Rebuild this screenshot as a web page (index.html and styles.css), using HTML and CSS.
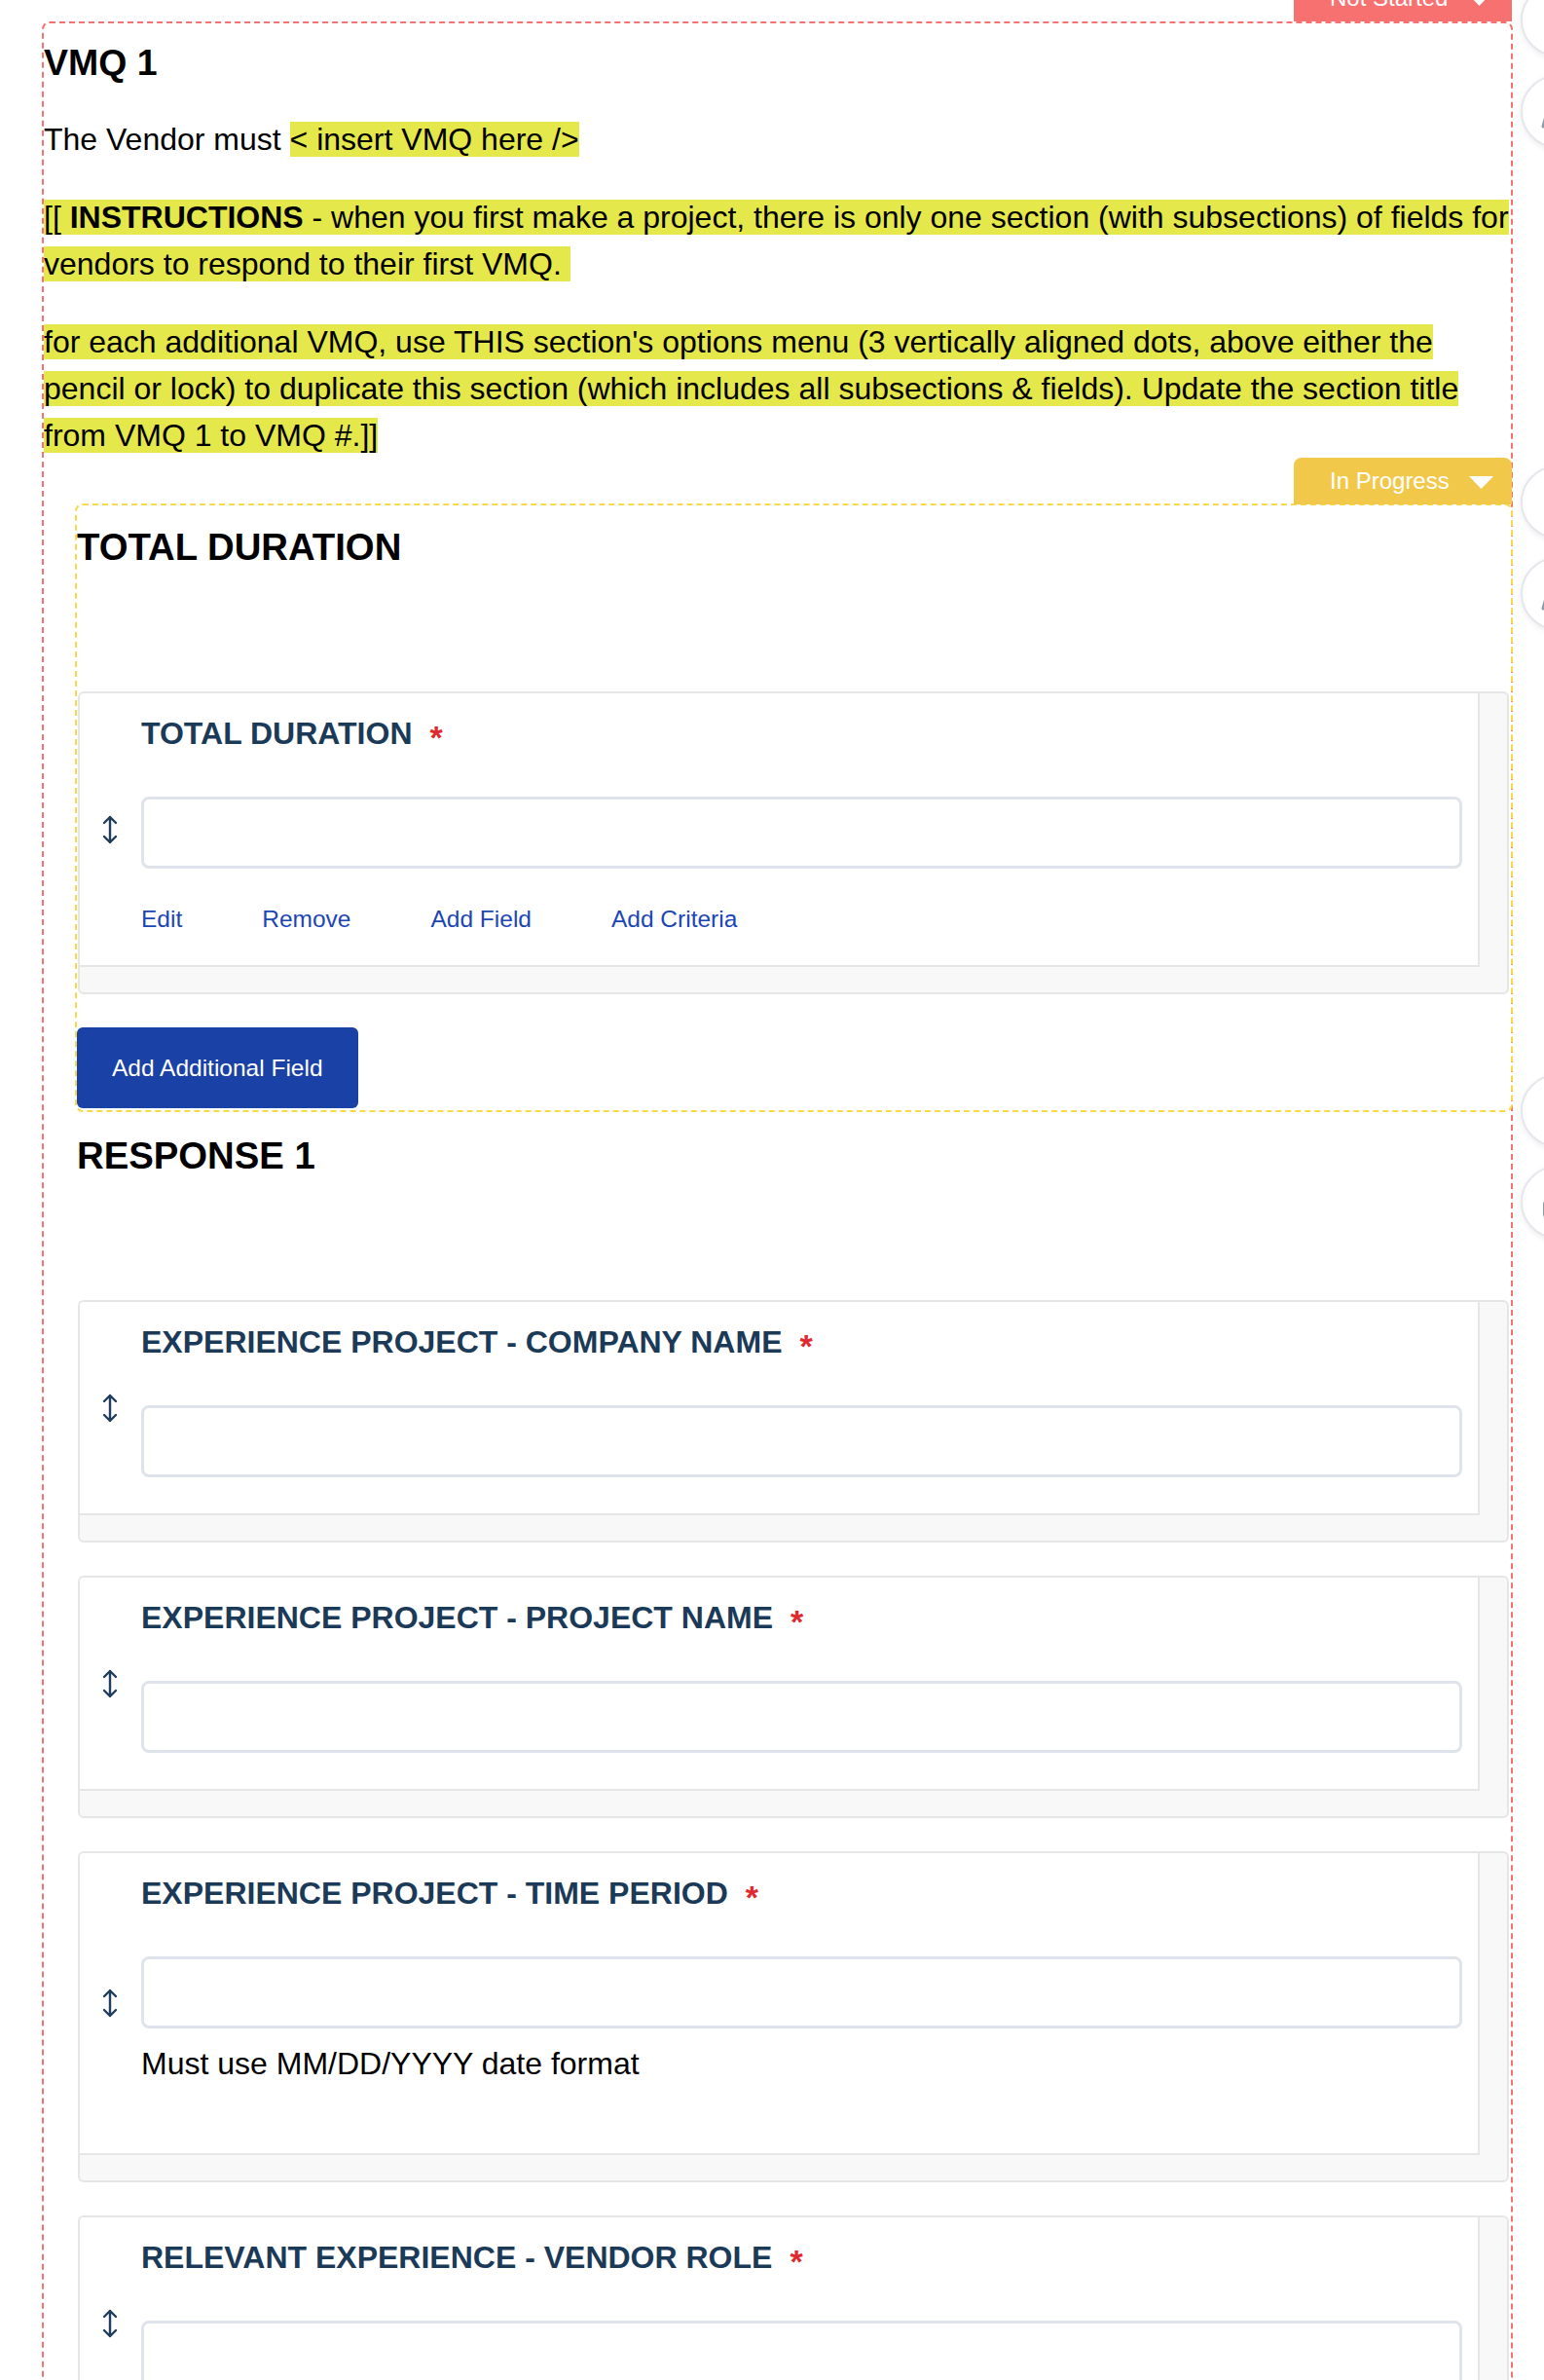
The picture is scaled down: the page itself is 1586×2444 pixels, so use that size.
FILE: index.html
```html
<!DOCTYPE html>
<html lang="en">
<head>
<meta charset="utf-8">
<title>VMQ 1</title>
<link rel="stylesheet" href="styles.css">
</head>
<body>
<div class="page">
  <section class="vmq">
    <div class="status status-red"><span>Not Started</span><svg class="caret" viewBox="0 0 25 13" width="25" height="13"><polygon points="0,0 25,0 12.5,13" fill="#fff"/></svg></div>
    <div class="side-tools">
      <div class="tool"><svg viewBox="0 0 36 36" width="36" height="36"><circle cx="18" cy="7" r="3.5" fill="#8e9aa8"/><circle cx="18" cy="18" r="3.5" fill="#8e9aa8"/><circle cx="18" cy="29" r="3.5" fill="#8e9aa8"/></svg></div>
      <div class="tool"><svg viewBox="0 0 24 24" width="36" height="36" fill="none" stroke="#8e9aa8" stroke-width="2" stroke-linecap="round" stroke-linejoin="round"><path d="M17 3a2.85 2.83 0 1 1 4 4L7.5 20.5 2 22l1.5-5.5Z"/></svg></div>
    </div>
    <h3 class="vmq-title">VMQ 1</h3>
    <p class="intro">The Vendor must <span class="hl">&lt; insert VMQ here /&gt;</span></p>
    <p class="intro"><span class="hl">[[ <b>INSTRUCTIONS</b> - when you first make a project, there is only one section (with subsections) of fields for vendors to respond to their first VMQ.&nbsp;</span></p>
    <p class="intro"><span class="hl">for each additional VMQ, use THIS section's options menu (3 vertically aligned dots, above either the pencil or lock) to duplicate this section (which includes all subsections &amp; fields). Update the section title from VMQ 1 to VMQ #.]]</span></p>

    <section class="sub sub-yellow">
      <div class="status status-yellow"><span>In Progress</span><svg class="caret" viewBox="0 0 25 13" width="25" height="13"><polygon points="0,0 25,0 12.5,13" fill="#fff"/></svg></div>
      <div class="side-tools">
        <div class="tool"><svg viewBox="0 0 36 36" width="36" height="36"><circle cx="18" cy="7" r="3.5" fill="#8e9aa8"/><circle cx="18" cy="18" r="3.5" fill="#8e9aa8"/><circle cx="18" cy="29" r="3.5" fill="#8e9aa8"/></svg></div>
        <div class="tool"><svg viewBox="0 0 24 24" width="36" height="36" fill="none" stroke="#8e9aa8" stroke-width="2" stroke-linecap="round" stroke-linejoin="round"><path d="M17 3a2.85 2.83 0 1 1 4 4L7.5 20.5 2 22l1.5-5.5Z"/></svg></div>
      </div>
      <h3 class="sub-title">TOTAL DURATION</h3>
      <div class="fields">
        <div class="field-card">
          <div class="field-inner">
            <svg class="drag" viewBox="0 0 16 30" width="16" height="30" fill="none" stroke="#1f3d5c" stroke-width="2.4" stroke-linecap="round" stroke-linejoin="round"><path d="M8 2V28M2 8L8 2L14 8M2 22L8 28L14 22"/></svg>
            <div class="field-body">
              <div class="field-label">TOTAL DURATION<span class="req">*</span></div>
              <input class="field-input" type="text">
              <div class="field-actions"><span>Edit</span><span>Remove</span><span>Add Field</span><span>Add Criteria</span></div>
            </div>
          </div>
        </div>
      </div>
      <button class="add-btn" type="button">Add Additional Field</button>
    </section>

    <section class="sub sub-plain">
      <div class="side-tools">
        <div class="tool"><svg viewBox="0 0 36 36" width="36" height="36"><circle cx="18" cy="7" r="3.5" fill="#8e9aa8"/><circle cx="18" cy="18" r="3.5" fill="#8e9aa8"/><circle cx="18" cy="29" r="3.5" fill="#8e9aa8"/></svg></div>
        <div class="tool"><svg viewBox="0 0 24 24" width="36" height="36" fill="none" stroke="#8e9aa8" stroke-width="2" stroke-linecap="round" stroke-linejoin="round"><rect x="3" y="11" width="18" height="11" rx="2"/><path d="M7 11V7a5 5 0 0 1 10 0v4"/></svg></div>
      </div>
      <h3 class="sub-title">RESPONSE 1</h3>
      <div class="fields">
        <div class="field-card">
          <div class="field-inner">
            <svg class="drag" viewBox="0 0 16 30" width="16" height="30" fill="none" stroke="#1f3d5c" stroke-width="2.4" stroke-linecap="round" stroke-linejoin="round"><path d="M8 2V28M2 8L8 2L14 8M2 22L8 28L14 22"/></svg>
            <div class="field-body">
              <div class="field-label">EXPERIENCE PROJECT - COMPANY NAME<span class="req">*</span></div>
              <input class="field-input" type="text">
            </div>
          </div>
        </div>
        <div class="field-card">
          <div class="field-inner">
            <svg class="drag" viewBox="0 0 16 30" width="16" height="30" fill="none" stroke="#1f3d5c" stroke-width="2.4" stroke-linecap="round" stroke-linejoin="round"><path d="M8 2V28M2 8L8 2L14 8M2 22L8 28L14 22"/></svg>
            <div class="field-body">
              <div class="field-label">EXPERIENCE PROJECT - PROJECT NAME<span class="req">*</span></div>
              <input class="field-input" type="text">
            </div>
          </div>
        </div>
        <div class="field-card">
          <div class="field-inner">
            <svg class="drag" viewBox="0 0 16 30" width="16" height="30" fill="none" stroke="#1f3d5c" stroke-width="2.4" stroke-linecap="round" stroke-linejoin="round"><path d="M8 2V28M2 8L8 2L14 8M2 22L8 28L14 22"/></svg>
            <div class="field-body">
              <div class="field-label">EXPERIENCE PROJECT - TIME PERIOD<span class="req">*</span></div>
              <input class="field-input" type="text">
              <p class="help">Must use MM/DD/YYYY date format</p>
            </div>
          </div>
        </div>
        <div class="field-card">
          <div class="field-inner">
            <svg class="drag" viewBox="0 0 16 30" width="16" height="30" fill="none" stroke="#1f3d5c" stroke-width="2.4" stroke-linecap="round" stroke-linejoin="round"><path d="M8 2V28M2 8L8 2L14 8M2 22L8 28L14 22"/></svg>
            <div class="field-body">
              <div class="field-label">RELEVANT EXPERIENCE - VENDOR ROLE<span class="req">*</span></div>
              <input class="field-input" type="text">
            </div>
          </div>
        </div>
      </div>
    </section>
  </section>
</div>
</body>
</html>
```

FILE: styles.css
```css
html, body {
  margin: 0;
  padding: 0;
  background: #ffffff;
}

body {
  font-family: "Liberation Sans", Arial, Helvetica, sans-serif;
  color: #000000;
}

.page {
  width: 1586px;
  height: 2444px;
  box-sizing: border-box;
  padding: 22px 0 0 43px;
  overflow: hidden;
}

.vmq {
  position: relative;
  width: 1511px;
  box-sizing: border-box;
  border: 2px dashed #f6716f;
  border-radius: 8px;
  font-size: 32px;
  line-height: 48px;
  padding-bottom: 40px;
}

.vmq-title {
  margin: 18px 0 33px;
  font-size: 37.44px;
  line-height: 44px;
  font-weight: bold;
}

.intro {
  margin: 32px 0;
}

.hl {
  background: #e5e84b;
}

.status {
  position: absolute;
  top: -50px;
  right: -1px;
  width: 224px;
  height: 48px;
  box-sizing: border-box;
  padding-left: 37px;
  display: flex;
  align-items: center;
  border-radius: 8px 8px 0 0;
  color: #ffffff;
  font-size: 24px;
  line-height: 28px;
}

.status .caret {
  margin-left: 20px;
  margin-top: 2px;
}

.status-red {
  background: #f6716f;
}

.status-yellow {
  top: -49px;
  background: #f2c84b;
}

.side-tools {
  position: absolute;
  left: calc(100% + 10px);
  top: -41px;
  display: flex;
  flex-direction: column;
  gap: 19px;
}

.tool {
  width: 75px;
  height: 75px;
  box-sizing: border-box;
  border: 2px solid #e6e7ec;
  border-radius: 50%;
  background: #ffffff;
  box-shadow: 0 2px 6px rgba(0, 0, 0, 0.08);
  display: flex;
  align-items: center;
  justify-content: center;
}

.sub {
  position: relative;
  margin: 0 -2px 0 32px;
  border: 2px dashed transparent;
  border-radius: 8px;
}

.sub-yellow {
  margin-top: 46px;
  border-color: #f9d949;
}

.sub-title {
  margin: 21px 0 126px;
  font-size: 38.3px;
  line-height: 44px;
  font-weight: bold;
}

.fields {
  display: flex;
  flex-direction: column;
  gap: 34px;
  padding: 0 2px 0 1px;
}

.field-card {
  border: 2px solid #e6e6e6;
  border-radius: 6px;
  background: #f8f8f8;
  padding: 0 28px 26px 0;
}

.field-inner {
  display: flex;
  align-items: center;
  gap: 24px;
  background: #ffffff;
  border-right: 2px solid #e6e6e6;
  border-bottom: 2px solid #e6e6e6;
  border-radius: 4px 0 0 0;
  padding: 0 16px 0 23px;
}

.drag {
  flex: none;
}

.field-body {
  flex: 1;
  padding: 23px 0 37px;
}

.field-label {
  height: 36px;
  font-size: 32px;
  line-height: 36px;
  font-weight: bold;
  color: #1b3a58;
  margin-bottom: 47px;
}

.req {
  color: #e0292f;
  font-size: 34px;
  line-height: 0;
  margin-left: 18px;
  vertical-align: -5px;
}

.field-input {
  display: block;
  width: 100%;
  height: 74px;
  box-sizing: border-box;
  margin: 0;
  border: 3px solid #dfe3ec;
  border-radius: 8px;
  background: #ffffff;
  outline: none;
}

.field-actions {
  display: flex;
  gap: 82px;
  height: 36px;
  margin: 34px 0 -8px;
  font-size: 24.5px;
  line-height: 36px;
  color: #1c46b4;
}

.help {
  margin: 12px 0 31px;
  font-size: 32px;
  line-height: 48px;
}

.add-btn {
  display: block;
  margin: 34px 0 2px;
  height: 83px;
  padding: 0 36px;
  border: none;
  border-radius: 6px;
  background: #1941a6;
  color: #ffffff;
  font-family: "Liberation Sans", Arial, Helvetica, sans-serif;
  font-size: 24.5px;
}
```
